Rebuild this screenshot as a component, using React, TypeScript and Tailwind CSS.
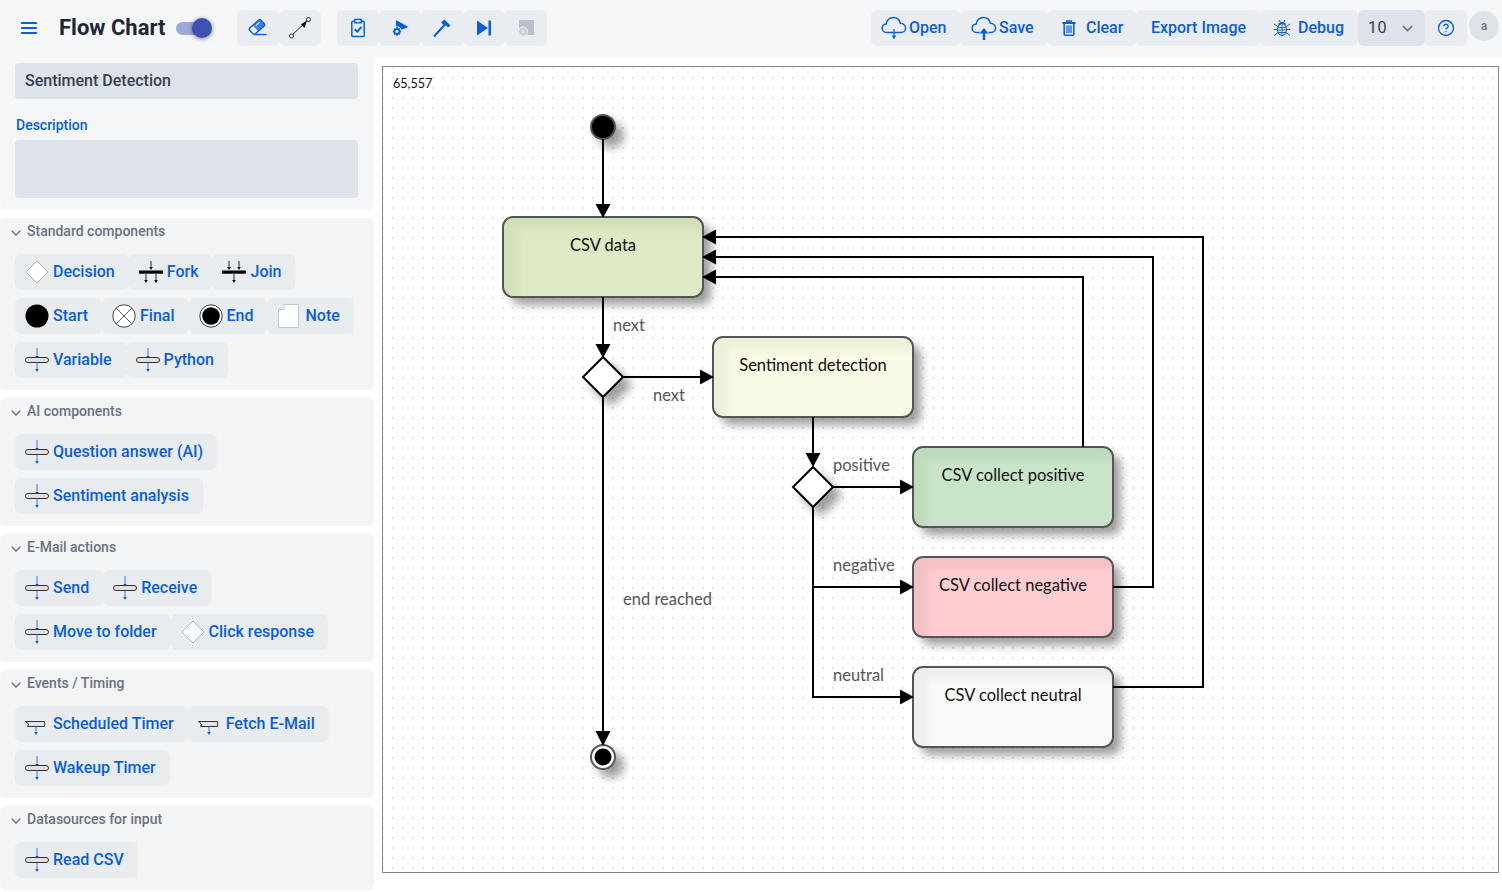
import React from "react";
import { ChevronDown, CircleHelp } from "lucide-react";

const BLUE = "#0b5ed7";

function Gear({ x, y, r, color, hole }: { x: number; y: number; r: number; color: string; hole: string }) {
  const teeth = [0, 45, 90, 135].map((a) => (
    <rect key={a} x={x - r * 1.3} y={y - r * 0.28} width={r * 2.6} height={r * 0.56} fill={color} transform={`rotate(${a} ${x} ${y})`} />
  ));
  return (
    <g>
      {teeth}
      <circle cx={x} cy={y} r={r} fill={color} />
      <circle cx={x} cy={y} r={r * 0.5} fill={hole} />
    </g>
  );
}

function Tb({ children }: { children: React.ReactNode }) {
  return <div className="w-[42px] h-9 bg-[#e9ecf1] rounded-md flex items-center justify-center">{children}</div>;
}

function IconEraser() {
  return (
    <svg width="20" height="20" viewBox="0 0 20 20" fill="none">
      <g transform="rotate(-42 9 9)">
        <rect x="1.5" y="5" width="15" height="8" rx="1.5" stroke={BLUE} strokeWidth="1.4" />
        <rect x="7" y="5" width="9.5" height="8" rx="1" fill={BLUE} fillOpacity="0.75" />
        <path d="M9 7.2H14.5" stroke="#e9ecf1" strokeWidth="1" />
      </g>
      <path d="M6 16.5H18.5" stroke={BLUE} strokeWidth="1.4" />
    </svg>
  );
}
function IconPath() {
  return (
    <svg width="24" height="24" viewBox="0 0 24 24" fill="none">
      <path d="M3.5 19.5L19 5" stroke="#222" strokeWidth="1" />
      <circle cx="3.5" cy="20" r="2" fill="#fff" stroke="#222" strokeWidth="1" />
      <circle cx="20.5" cy="3.5" r="2" fill="#fff" stroke="#222" strokeWidth="1" />
      <path d="M19 4.5L16.5 12L13 8.2Z" fill="#111" />
    </svg>
  );
}
function IconClip() {
  return (
    <svg width="20" height="20" viewBox="0 0 20 20" fill="none">
      <rect x="3.8" y="3.2" width="12.4" height="15.3" rx="1" stroke={BLUE} strokeWidth="1.5" />
      <rect x="6.8" y="1.4" width="6.4" height="3.4" fill="#e9ecf1" stroke={BLUE} strokeWidth="1.4" />
      <path d="M6.8 11.2L9.3 13.6L13.4 9" stroke={BLUE} strokeWidth="1.9" />
    </svg>
  );
}
function IconDeploy() {
  return (
    <svg width="20" height="20" viewBox="0 0 20 20">
      <path d="M6 2L18.5 9L6 14Z" fill={BLUE} />
      <circle cx="7" cy="13.5" r="5" fill="#e9ecf1" />
      <Gear x={7} y={13.5} r={3.2} color={BLUE} hole="#e9ecf1" />
    </svg>
  );
}
function IconHammer() {
  return (
    <svg width="20" height="20" viewBox="0 0 20 20" fill="none">
      <path d="M2 18.5L12.5 7" stroke={BLUE} strokeWidth="2" />
      <path d="M9 4.2L12.5 1.5L18.5 7.5L16 9.5L14.5 7.8L12 7.5Z" fill={BLUE} />
    </svg>
  );
}
function IconSkip() {
  return (
    <svg width="20" height="20" viewBox="0 0 20 20">
      <path d="M3 2.5L14 10L3 17.5Z" fill={BLUE} />
      <rect x="14.5" y="2.5" width="2.5" height="15" fill={BLUE} />
    </svg>
  );
}
function IconDisabled() {
  return (
    <svg width="20" height="20" viewBox="0 0 20 20">
      <rect x="3" y="2" width="15" height="15" fill="#b9bfcc" />
      <circle cx="7" cy="13.5" r="5" fill="#e9ecf1" />
      <Gear x={7} y={13.5} r={3.2} color="#c9cdd5" hole="#e9ecf1" />
    </svg>
  );
}
function CloudOpen() {
  return (
    <svg width="26" height="26" viewBox="0 0 26 26" fill="none">
      <path d="M7 17.5H5.5C3 17.5 1.2 15.6 1.2 13.2C1.2 10.9 3 9.2 5.2 9C5.6 5.2 8.6 2.4 12.3 2.4C15.8 2.4 18.6 4.9 19.3 8.2C22.2 8.3 24.6 10.4 24.6 13.2C24.6 15.7 22.6 17.5 20 17.5H7Z" stroke={BLUE} strokeWidth="1.5" />
      <path d="M13 14V22" stroke={BLUE} strokeWidth="1.2" />
      <path d="M10.8 20.5H15.2L13 24.5Z" fill={BLUE} />
    </svg>
  );
}
function CloudSave() {
  return (
    <svg width="26" height="26" viewBox="0 0 26 26" fill="none">
      <path d="M8.5 17.5H5.5C3 17.5 1.2 15.6 1.2 13.2C1.2 10.9 3 9.2 5.2 9C5.6 5.2 8.6 2.4 12.3 2.4C15.8 2.4 18.6 4.9 19.3 8.2C22.2 8.3 24.6 10.4 24.6 13.2C24.6 15.7 22.6 17.5 20 17.5H17.5" stroke={BLUE} strokeWidth="1.5" />
      <path d="M13 15V25" stroke={BLUE} strokeWidth="2.4" />
      <path d="M8.5 18.5L13 13L17.5 18.5Z" fill={BLUE} />
    </svg>
  );
}
function IconTrash() {
  return (
    <svg width="14" height="16" viewBox="0 0 14 16" fill="none" className="shrink-0">
      <path d="M0.5 3H13.5" stroke={BLUE} strokeWidth="2" />
      <path d="M4.6 2.5V1H9.4V2.5" stroke={BLUE} strokeWidth="1.4" />
      <path d="M2.2 4V14.2Q2.2 15.2 3.2 15.2H10.8Q11.8 15.2 11.8 14.2V4" stroke={BLUE} strokeWidth="1.6" />
      <path d="M5 5.5V13M7 5.5V13M9 5.5V13" stroke={BLUE} strokeWidth="1.2" />
    </svg>
  );
}
function IconBug() {
  return (
    <svg width="18" height="18" viewBox="0 0 18 18" fill="none" stroke={BLUE} className="shrink-0">
      <ellipse cx="9" cy="10.5" rx="4.4" ry="6" strokeWidth="1.1" />
      <path d="M5.5 5.5Q9 2 12.5 5.5" strokeWidth="1.3" />
      <path d="M9 5V16.5M5 8.5H13M4.8 11H13.2M5.2 13.5H12.8" strokeWidth="0.9" />
      <path d="M6 1L7.5 3.5M12 1L10.5 3.5M1 5L4.8 7.5M17 5L13.2 7.5M0.5 10.5H4.6M17.5 10.5H13.4M1 16.5L5 13.5M17 16.5L13 13.5" strokeWidth="1" />
    </svg>
  );
}

function Tr({ children, className }: { children: React.ReactNode; className?: string }) {
  return (
    <div className={`h-9 bg-[#e9ecf1] rounded-md flex items-center text-[16px] font-medium text-[#0b5ed7] ${className ?? ""}`}>
      {children}
    </div>
  );
}

function Header() {
  return (
    <header className="h-[58px] bg-[#f5f6f8] flex items-start pt-[10px] pr-[3px] shrink-0">
      <svg className="ml-[21px] mt-[11px]" width="16" height="14" viewBox="0 0 16 14">
        <rect x="0" y="1" width="16" height="2" rx="0.5" fill={BLUE} />
        <rect x="0" y="6" width="16" height="2" rx="0.5" fill={BLUE} />
        <rect x="0" y="11" width="16" height="2" rx="0.5" fill={BLUE} />
      </svg>
      <div className="ml-[22px] w-[117px] h-9 flex items-center text-[22px] leading-none font-bold text-[#1f2733] whitespace-nowrap">Flow Chart</div>
      <div className="relative w-9 h-9 flex items-center">
        <div className="w-7 h-[13px] rounded-full bg-[#9ea8d9]" />
        <div className="absolute left-4 top-2 w-5 h-5 rounded-full bg-[#3f51b5] shadow-[0_1px_4px_rgba(0,0,0,0.5)]" />
      </div>
      <div className="ml-[25px] flex">
        <Tb><IconEraser /></Tb>
        <Tb><IconPath /></Tb>
      </div>
      <div className="ml-4 flex">
        <Tb><IconClip /></Tb>
        <Tb><IconDeploy /></Tb>
        <Tb><IconHammer /></Tb>
        <Tb><IconSkip /></Tb>
        <Tb><IconDisabled /></Tb>
      </div>
      <div className="ml-auto flex">
        <Tr className="w-[90px] pl-[10px] gap-[2px]"><CloudOpen /><span>Open</span></Tr>
        <Tr className="w-[86px] pl-[10px] gap-[2px]"><CloudSave /><span>Save</span></Tr>
        <Tr className="w-[90px] pl-[15px] gap-[10px]"><IconTrash /><span>Clear</span></Tr>
        <Tr className="w-[123px] justify-center"><span>Export Image</span></Tr>
        <Tr className="w-[98px] pl-[13px] gap-[7px]"><IconBug /><span>Debug</span></Tr>
        <div className="w-[67px] h-9 bg-[#dee2e9] rounded-md flex items-center pl-[10px] text-[16px] text-[#374151]">
          <span className="tracking-[0.5px]">10</span>
          <ChevronDown className="ml-3 text-[#6b7280]" size={17} strokeWidth={2} />
        </div>
        <Tr className="w-[42px] justify-center"><CircleHelp size={18} strokeWidth={1.8} /></Tr>
        <div className="ml-[2px] mt-px w-[30px] h-[30px] rounded-full bg-[#dee2e9] flex items-center justify-center text-[12px] font-medium text-[#6b7280]">a</div>
      </div>
    </header>
  );
}

type IconKind = "decision" | "fork" | "join" | "start" | "final" | "end" | "note" | "bar" | "timer";

function ChipIcon({ kind }: { kind: IconKind }) {
  const arrow = (x: number, y1: number, y2: number, c: string, w = 0.9) => (
    <g>
      <path d={`M${x} ${y1}V${y2 - 2}`} stroke={c} strokeWidth={w} />
      <path d={`M${x - 1.8} ${y2 - 3}H${x + 1.8}L${x} ${y2}Z`} fill={c} />
    </g>
  );
  let c: React.ReactNode = null;
  if (kind === "decision") c = <path d="M12 1L23 12L12 23L1 12Z" fill="#fff" stroke="#b0b0b0" strokeWidth="1" />;
  if (kind === "fork")
    c = (
      <g>
        {arrow(12, 1, 10, "#111")}
        <rect x="0" y="10.5" width="24" height="3.2" fill="#000" />
        {arrow(7, 14, 23, "#111")}
        {arrow(17, 14, 23, "#111")}
      </g>
    );
  if (kind === "join")
    c = (
      <g>
        {arrow(7, 1, 10, "#111")}
        {arrow(17, 1, 10, "#111")}
        <rect x="0" y="10.5" width="24" height="3.2" fill="#000" />
        {arrow(12, 14, 23, "#111")}
      </g>
    );
  if (kind === "start") c = <circle cx="12" cy="12" r="11.5" fill="#000" />;
  if (kind === "final")
    c = (
      <g>
        <circle cx="12" cy="12" r="11.2" fill="#fff" stroke="#444" strokeWidth="1" />
        <path d="M4.2 4.2L19.8 19.8M19.8 4.2L4.2 19.8" stroke="#555" strokeWidth="1" />
      </g>
    );
  if (kind === "end")
    c = (
      <g>
        <circle cx="12" cy="12" r="11.2" fill="#fff" stroke="#333" strokeWidth="1" />
        <circle cx="12" cy="12" r="8.8" fill="#000" />
      </g>
    );
  if (kind === "note")
    c = (
      <g stroke="#c4c4c4" strokeWidth="1">
        <path d="M7 0.5H21.5V23.5H1.5V5.5Z" fill="#fff" />
        <path d="M1.5 5.5H7V0.5" fill="#f3f3f3" />
      </g>
    );
  if (kind === "bar")
    c = (
      <g>
        {arrow(12, 0, 11, "#0b5ed7", 0.8)}
        {arrow(12, 13, 24, "#0b5ed7", 0.8)}
        <rect x="0.5" y="9.5" width="23" height="5" rx="2.5" fill="#e0e0e0" stroke="#333" strokeWidth="1" />
      </g>
    );
  if (kind === "timer")
    c = (
      <g>
        {arrow(11, 14, 23, "#0b5ed7", 0.8)}
        <path d="M0.5 9.5H19.5Q20 12 19.5 14.5H2.5L3.5 12Z" fill="#e4e4e4" stroke="#333" strokeWidth="1" />
      </g>
    );
  return (
    <svg width="24" height="24" viewBox="0 0 24 24" className="shrink-0" fill="none">
      {c}
    </svg>
  );
}

function Chip({ kind, label }: { kind: IconKind; label: string }) {
  return (
    <div className="h-9 bg-[#e9ecef] rounded-md flex items-center pl-[10px] pr-[14px] gap-1 text-[16px] font-medium text-[#0b5ed7] whitespace-nowrap">
      <ChipIcon kind={kind} />
      <span>{label}</span>
    </div>
  );
}

function Section({ title, items }: { title: string; items: [IconKind, string][] }) {
  return (
    <section className="bg-[#f3f4f6] rounded-md pb-3">
      <div className="h-9 pl-[8px] pt-[5px] flex items-start gap-[3px] text-[14px] leading-4 font-medium text-[#6b7280]">
        <ChevronDown size={16} strokeWidth={1.8} className="mt-[2px] text-[#5f6b7a]" />
        <span>{title}</span>
      </div>
      <div className="pl-[15px] pr-[15px] flex flex-wrap gap-y-2">
        {items.map(([k, l]) => (
          <Chip key={l} kind={k} label={l} />
        ))}
      </div>
    </section>
  );
}

function Sidebar() {
  return (
    <aside className="w-[374px] shrink-0 flex flex-col gap-2">
      <section className="bg-[#f5f6f8] rounded-b-md h-[152px] pl-[15px] pr-4 pt-[5px]">
        <div className="h-9 bg-[#dee2e9] rounded-[4px] flex items-center pl-[10px] text-[16px] font-medium text-[#374151]">Sentiment Detection</div>
        <div className="mt-[17px] pl-px h-[18px] flex items-center text-[14px] font-medium text-[#0b5ed7]">Description</div>
        <div className="mt-[6px] h-[58px] bg-[#dee2e9] rounded-[4px]" />
      </section>
      <Section
        title="Standard components"
        items={[
          ["decision", "Decision"],
          ["fork", "Fork"],
          ["join", "Join"],
          ["start", "Start"],
          ["final", "Final"],
          ["end", "End"],
          ["note", "Note"],
          ["bar", "Variable"],
          ["bar", "Python"],
        ]}
      />
      <Section title="AI components" items={[["bar", "Question answer (AI)"], ["bar", "Sentiment analysis"]]} />
      <Section
        title="E-Mail actions"
        items={[
          ["bar", "Send"],
          ["bar", "Receive"],
          ["bar", "Move to folder"],
          ["decision", "Click response"],
        ]}
      />
      <Section
        title="Events / Timing"
        items={[
          ["timer", "Scheduled Timer"],
          ["timer", "Fetch E-Mail"],
          ["bar", "Wakeup Timer"],
        ]}
      />
      <Section title="Datasources for input" items={[["bar", "Read CSV"]]} />
    </aside>
  );
}

function Node({ id, x, y, light, dark, label, ty }: { id: string; x: number; y: number; light: string; dark: string; label: string; ty: number }) {
  return (
    <g>
      <g filter="url(#shadow)">
        <rect x={x} y={y} width="200" height="80" rx="10" fill={dark} />
      </g>
      <clipPath id={id}>
        <rect x={x} y={y} width="200" height="80" rx="10" />
      </clipPath>
      <g clipPath={`url(#${id})`}>
        <rect x={x + 15} y={y + 13} width="200" height="80" fill={light} filter="url(#soft)" />
      </g>
      <rect x={x} y={y} width="200" height="80" rx="10" fill="none" stroke="#555" strokeWidth="2" />
      <text x={x + 100} y={ty} textAnchor="middle" fontSize="16.5" fill="#111">
        {label}
      </text>
    </g>
  );
}

function Diamond({ cx, cy }: { cx: number; cy: number }) {
  return (
    <g filter="url(#shadow)">
      <path d={`M${cx} ${cy - 20}L${cx + 20} ${cy}L${cx} ${cy + 20}L${cx - 20} ${cy}Z`} fill="#fff" stroke="#000" strokeWidth="2" />
    </g>
  );
}

const lines = [
  "M603 139V206",
  "M603 297V346",
  "M623 377H702",
  "M603 397V734",
  "M813 417V456",
  "M833 487H902",
  "M813 507V697H902",
  "M813 587H902",
  "M1083 447V277H714",
  "M1113 587H1153V257H714",
  "M1113 687H1203V237H714",
];
const heads = [
  "M595.5 204H610.5L603 218Z",
  "M595.5 344H610.5L603 358Z",
  "M700 369.5V384.5L714 377Z",
  "M595.5 731H610.5L603 746Z",
  "M805.5 453H820.5L813 467Z",
  "M900 479.5V494.5L914 487Z",
  "M900 579.5V594.5L914 587Z",
  "M900 689.5V704.5L914 697Z",
  "M716 269.5V284.5L702 277Z",
  "M716 249.5V264.5L702 257Z",
  "M716 229.5V244.5L702 237Z",
];
const labels: [string, number, number][] = [
  ["next", 613, 331],
  ["next", 653, 401],
  ["positive", 833, 471],
  ["negative", 833, 571],
  ["neutral", 833, 681],
  ["end reached", 623, 605],
];

function Canvas() {
  return (
    <div className="ml-2 mt-2 w-[1117px] h-[807px] border border-[#888] bg-white overflow-hidden">
      <svg viewBox="383 67 1115 805" className="block w-full h-full [font-family:Lato,sans-serif]">
        <defs>
          <pattern id="dots" x="392" y="77" width="10" height="10" patternUnits="userSpaceOnUse">
            <rect width="2" height="2" fill="#e6e6e6" />
          </pattern>
          <filter id="shadow" x="-40%" y="-40%" width="200%" height="200%">
            <feDropShadow dx="8" dy="8" stdDeviation="5" floodColor="#000" floodOpacity="0.38" />
          </filter>
          <filter id="soft" x="-20%" y="-20%" width="140%" height="140%">
            <feGaussianBlur stdDeviation="3" />
          </filter>
        </defs>
        <rect x="383" y="67" width="1115" height="805" fill="url(#dots)" />
        <text x="393" y="87.5" fontSize="12.6" fill="#111">65,557</text>

        <Node id="n1" x={503} y={217} light="#dee9c6" dark="#d2e1b9" label="CSV data" ty={251} />
        <Node id="n2" x={713} y={337} light="#f8f9e4" dark="#eff0da" label="Sentiment detection" ty={371} />
        <Node id="n3" x={913} y={447} light="#c9e5c9" dark="#bedbbe" label="CSV collect positive" ty={481} />
        <Node id="n4" x={913} y={557} light="#fecdd2" dark="#f4c2c6" label="CSV collect negative" ty={591} />
        <Node id="n5" x={913} y={667} light="#f9f9f9" dark="#eeeeee" label="CSV collect neutral" ty={701} />
        <Diamond cx={603} cy={377} />
        <Diamond cx={813} cy={487} />
        <g filter="url(#shadow)">
          <circle cx="603" cy="127" r="12" fill="#000" stroke="#555" strokeWidth="2" />
        </g>
        <g filter="url(#shadow)">
          <circle cx="603" cy="757" r="12" fill="#fff" stroke="#555" strokeWidth="2" />
        </g>
        <circle cx="603" cy="757" r="8.5" fill="#000" />

        {lines.map((d) => (
          <path key={d} d={d} fill="none" stroke="#000" strokeWidth="2" />
        ))}
        {heads.map((d) => (
          <path key={d} d={d} fill="#000" />
        ))}
        {labels.map(([t, x, y]) => (
          <text key={t + x} x={x} y={y} fontSize="16.5" fill="#555">
            {t}
          </text>
        ))}
      </svg>
    </div>
  );
}

export default function App() {
  return (
    <div className="w-[1502px] h-[892px] bg-white overflow-hidden flex flex-col [font-family:Roboto,sans-serif]">
      <Header />
      <div className="flex">
        <Sidebar />
        <Canvas />
      </div>
    </div>
  );
}
